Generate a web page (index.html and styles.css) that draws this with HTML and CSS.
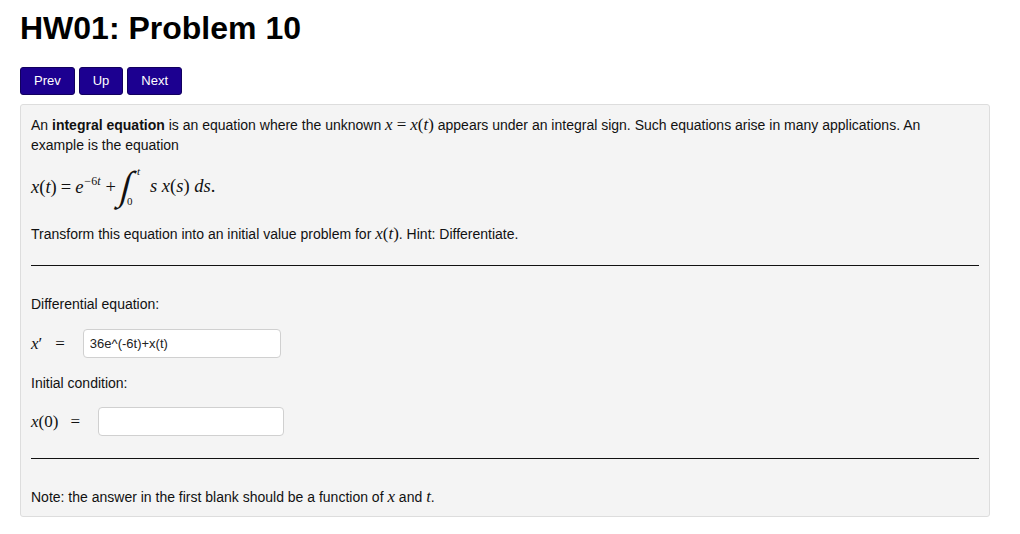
FILE: index.html
```html
<!DOCTYPE html>
<html>
<head>
<meta charset="utf-8">
<link rel="stylesheet" href="styles.css">
</head>
<body>
<h1 class="title">HW01: Problem 10</h1>
<nav class="nav">
  <a class="btn" href="#">Prev</a>
  <a class="btn" href="#">Up</a>
  <a class="btn" href="#">Next</a>
</nav>
<div class="panel">
  <p class="para intro">An <b>integral equation</b> is an equation where the unknown <span class="m"><i>x</i><span class="eq">=</span><i>x</i>(<i>t</i>)</span> appears under an integral sign. Such equations arise in many applications. An example is the equation</p>
  <div class="display">
    <span class="dm"><i>x</i>(<i>t</i>)<span class="eq">=</span><i>e</i><sup class="sup">−6<i>t</i></sup><span class="plus">+</span></span>
    <span class="int"><span class="intsign">∫</span><span class="lims"><i class="hi">t</i><span class="lo">0</span></span></span>
    <span class="dm integrand"><i>s</i> <i>x</i>(<i>s</i>) <i>ds</i>.</span>
  </div>
  <p class="para transform">Transform this equation into an initial value problem for <span class="m"><i>x</i>(<i>t</i>)</span>. Hint: Differentiate.</p>
  <hr class="rule">
  <p class="para label">Differential equation:</p>
  <div class="row row1">
    <span class="m lhs"><i>x</i>′<span class="eq eq1">=</span></span>
    <input class="field field1" type="text" value="36e^(-6t)+x(t)">
  </div>
  <p class="para label2">Initial condition:</p>
  <div class="row row2">
    <span class="m lhs"><i>x</i>(0)<span class="eq eq2">=</span></span>
    <input class="field field2" type="text" value="">
  </div>
  <hr class="rule rule2">
  <p class="para note">Note: the answer in the first blank should be a function of <span class="m"><i>x</i></span> and <span class="m"><i>t</i></span>.</p>
</div>
</body>
</html>
```
FILE: styles.css
```css
html, body {
  margin: 0;
  padding: 0;
  background: #ffffff;
}
body {
  font-family: "Liberation Sans", Arial, sans-serif;
  font-size: 14px;
  color: #111;
  padding: 0 30px 0 20px;
}
.title {
  font-size: 32px;
  font-weight: bold;
  margin: 10px 0 0 0;
  line-height: 36px;
  color: #000;
}
.nav {
  display: flex;
  gap: 4px;
  margin-top: 21px;
}
.btn {
  display: inline-block;
  background: #1c0090;
  border: 1px solid #12005e;
  color: #fff;
  text-decoration: none;
  font-size: 13px;
  line-height: 26px;
  height: 26px;
  padding: 0 13px;
  border-radius: 3px;
}
.panel {
  margin-top: 9px;
  background: #f4f4f4;
  border: 1px solid #dddddd;
  border-radius: 3px;
  padding: 10px 10px 9px 10px;
}
.para {
  margin: 0;
  line-height: 20px;
}
.intro { padding-right: 20px; }
.m {
  font-family: "Liberation Serif", "Times New Roman", serif;
  font-size: 17px;
  line-height: 1;
}
.dm {
  font-family: "Liberation Serif", "Times New Roman", serif;
  font-size: 18.5px;
  white-space: pre;
}
.eq { margin: 0 4px; font-style: normal; }
.display {
  display: flex;
  align-items: center;
  margin: 6px 0 0 0;
  height: 50px;
}
.sup {
  font-size: 12px;
  vertical-align: 8px;
  margin-left: 1px;
}
.plus { margin: 0 5px 0 5px; }
.int {
  display: inline-flex;
  align-items: center;
  margin-right: 6px;
  font-family: "Liberation Serif", "Times New Roman", serif;
}
.intsign {
  font-size: 40px;
  line-height: 44px;
  transform: skewX(-14deg) scaleX(0.9);
  display: inline-block;
}
.lims {
  display: inline-flex;
  flex-direction: column;
  justify-content: space-between;
  height: 42px;
  font-size: 11px;
  margin-left: -3px;
}
.hi { margin-left: 8px; line-height: 12px; }
.lo { line-height: 12px; margin-left: -2px; }
.integrand { margin-left: 4px; }
.transform { margin-top: 13px; }
.rule {
  border: 0;
  border-top: 1px solid #111;
  margin: 21px 0 0 0;
}
.label { margin-top: 28px; }
.row {
  display: flex;
  align-items: center;
  height: 29px;
}
.row1 { margin-top: 15px; }
.row2 { margin-top: 14px; }
.lhs {
  white-space: pre;
  margin-right: 18px;
}
.lhs .eq { margin-right: 0; }
.lhs .eq1 { margin-left: 13px; }
.lhs .eq2 { margin-left: 12px; }
.field {
  box-sizing: border-box;
  height: 29px;
  border: 1px solid #d0d0d0;
  border-radius: 4px;
  background: #fff;
  font-family: "Liberation Sans", Arial, sans-serif;
  font-size: 13px;
  padding: 0 6px;
  color: #222;
}
.field1 { width: 198px; }
.field2 { width: 186px; }
.label2 { margin-top: 15px; }
.rule2 { margin-top: 22px; }
.note { margin-top: 28px; }
```
